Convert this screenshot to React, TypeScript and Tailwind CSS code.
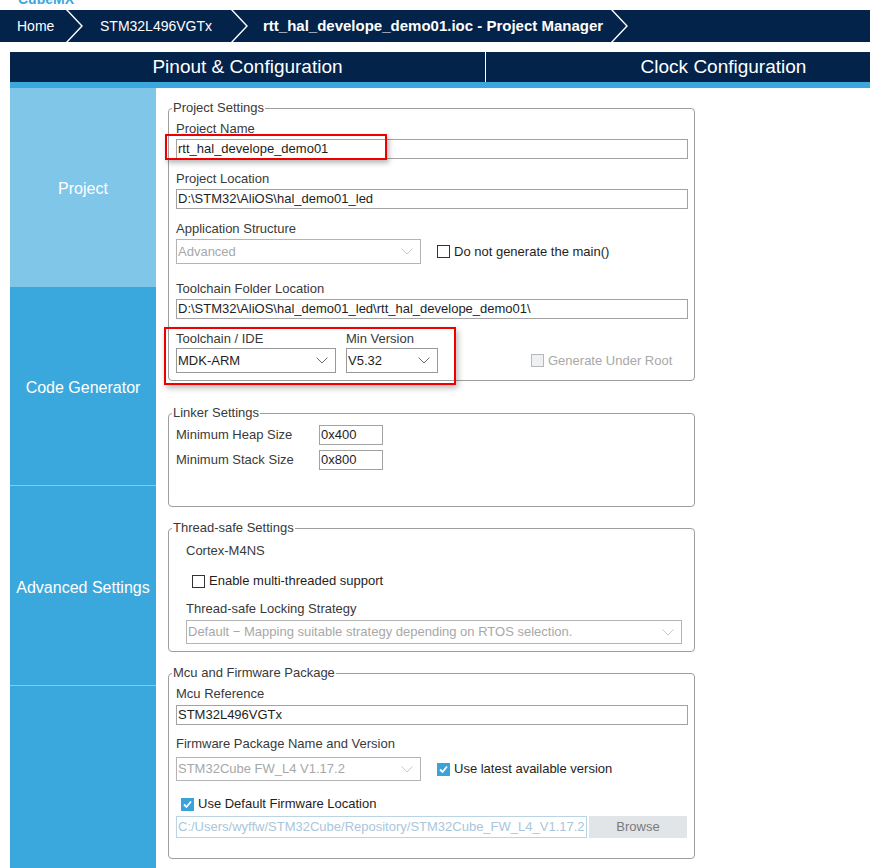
import React from "react";

function SelChevron({ disabled }: { disabled?: boolean }) {
  return (
    <svg width="12" height="7" viewBox="0 0 12 7" className="shrink-0">
      <polyline
        points="0.5,0.5 6,6 11.5,0.5"
        fill="none"
        stroke={disabled ? "#c8c8c8" : "#6b6b6b"}
        strokeWidth="1"
      />
    </svg>
  );
}

function CrumbSep() {
  return (
    <svg width="18" height="32" viewBox="0 0 18 32" className="shrink-0">
      <polyline points="1,-1 17,16 1,33" fill="none" stroke="#ffffff" strokeWidth="1.4" />
    </svg>
  );
}

function Box({ state }: { state: "off" | "on" | "disabled" }) {
  if (state === "on") {
    return (
      <span className="w-[13px] h-[13px] bg-[#3ba3da] flex items-center justify-center shrink-0">
        <svg width="11" height="11" viewBox="0 0 11 11">
          <polyline points="2,5.5 4.5,8 9,2.5" fill="none" stroke="#ffffff" strokeWidth="1.8" />
        </svg>
      </span>
    );
  }
  if (state === "disabled") {
    return <span className="w-[13px] h-[13px] border border-[#b8b8b8] bg-[#eef0f2] shrink-0" />;
  }
  return <span className="w-[13px] h-[13px] border border-[#333333] bg-white shrink-0" />;
}

function Select({
  value,
  w,
  disabled,
  h = "h-[25px]",
}: {
  value: string;
  w: string;
  disabled?: boolean;
  h?: string;
}) {
  return (
    <div
      className={`${w} ${h} border ${
        disabled ? "border-[#b4b4b4] text-[#a8a8a8]" : "border-[#999999] text-[#1e1e1e]"
      } flex items-center justify-between pl-[1px] pr-[7px] text-[13px] whitespace-nowrap overflow-hidden`}
    >
      <span>{value}</span>
      <SelChevron disabled={disabled} />
    </div>
  );
}

function Input({ value, w = "w-full", h = "h-[20px]" }: { value: string; w?: string; h?: string }) {
  return (
    <div
      className={`${w} ${h} border border-[#a3a3a3] flex items-center pl-[1px] text-[13px] text-[#1e1e1e] whitespace-nowrap overflow-hidden`}
    >
      {value}
    </div>
  );
}

const labelCls = "h-[16px] leading-[16px] text-[13px] text-[#3a3a3a] whitespace-nowrap";
const fsCls = "ml-[12px] w-[527px] border border-[#9e9e9e] rounded-[4px] min-w-0";
const legendCls = "ml-[3px] px-[1px] text-[13px] leading-[16px] text-[#3a3a3a]";

export default function App() {
  return (
    <div className="w-full h-[868px] overflow-hidden bg-white font-['Liberation_Sans',Arial,sans-serif] flex flex-col">
      {/* CubeMX cut-off title */}
      <div className="h-[10px] overflow-hidden pl-[18px] shrink-0">
        <span className="block -mt-[8px] text-[14px] leading-[14px] font-bold text-[#3ca6dc]">CubeMX</span>
      </div>

      {/* Breadcrumb */}
      <div className="h-[32px] bg-[#03234b] flex items-center text-white text-[14px] shrink-0">
        <div className="w-[65px] pl-[17px] whitespace-nowrap">Home</div>
        <CrumbSep />
        <div className="w-[147px] pl-[17px] whitespace-nowrap">STM32L496VGTx</div>
        <CrumbSep />
        <div className="w-[362px] pl-[15px] whitespace-nowrap font-bold text-[15px]">
          rtt_hal_develope_demo01.ioc - Project Manager
        </div>
        <CrumbSep />
      </div>

      {/* Tabs */}
      <div className="mt-[10px] ml-[10px] shrink-0 flex flex-col">
        <div className="h-[30px] bg-[#03234b] flex text-white text-[19px]">
          <div className="w-[475px] shrink-0 flex items-center justify-center">Pinout &amp; Configuration</div>
          <div className="w-[1px] shrink-0 bg-white" />
          <div className="w-[475px] shrink-0 flex items-center justify-center">Clock Configuration</div>
        </div>
        <div className="h-[6px] bg-[#3aa8dc]" />
      </div>

      {/* Body */}
      <div className="flex flex-1 min-h-0">
        {/* Sidebar */}
        <div className="ml-[10px] w-[146px] shrink-0 flex flex-col text-white text-[16px]">
          <div className="h-[199px] bg-[#7fc6e9] flex items-center justify-center pt-[2px]">Project</div>
          <div className="h-[198px] bg-[#3aa8dc] flex items-center justify-center pt-[4px]">Code Generator</div>
          <div className="h-[1px] bg-[#86cbee]" />
          <div className="h-[199px] bg-[#3aa8dc] flex items-center justify-center pt-[4px]">Advanced Settings</div>
          <div className="h-[1px] bg-[#86cbee]" />
          <div className="flex-1 bg-[#3aa8dc]" />
        </div>

        {/* Content */}
        <div className="flex-1 flex flex-col">
          {/* Project Settings */}
          <fieldset className={`${fsCls} mt-[12px] pb-[7px]`}>
            <legend className={legendCls}>Project Settings</legend>
            <div className="pl-[7px] pr-[6px] pt-[5px] flex flex-col">
              <div className="relative flex flex-col">
                <div className={labelCls}>Project Name</div>
                <div className="mt-[2px]">
                  <Input value="rtt_hal_develope_demo01" />
                </div>
                <div className="absolute left-[-11px] top-[13px] w-[222px] h-[26px] border-2 border-[#ee0000] shadow-[2px_3px_5px_rgba(0,0,0,0.28)]" />
              </div>
              <div className={`${labelCls} mt-[12px]`}>Project Location</div>
              <div className="mt-[2px]">
                <Input value="D:\STM32\AliOS\hal_demo01_led" />
              </div>
              <div className={`${labelCls} mt-[12px]`}>Application Structure</div>
              <div className="mt-[2px] flex items-center">
                <Select value="Advanced" w="w-[245px]" disabled />
                <div className="ml-[16px] flex items-center gap-[4px] text-[13px] text-[#1e1e1e]">
                  <Box state="off" />
                  <span>Do not generate the main()</span>
                </div>
              </div>
              <div className={`${labelCls} mt-[17px]`}>Toolchain Folder Location</div>
              <div className="mt-[2px]">
                <Input value="D:\STM32\AliOS\hal_demo01_led\rtt_hal_develope_demo01\" />
              </div>
              <div className="relative mt-[12px] flex items-end">
                <div className="flex flex-col">
                  <div className={labelCls}>Toolchain / IDE</div>
                  <div className="mt-[1px]">
                    <Select value="MDK-ARM" w="w-[160px]" />
                  </div>
                </div>
                <div className="ml-[10px] flex flex-col">
                  <div className={labelCls}>Min Version</div>
                  <div className="mt-[1px]">
                    <Select value="V5.32" w="w-[92px]" />
                  </div>
                </div>
                <div className="ml-[93px] h-[25px] flex items-center gap-[4px] text-[13px] text-[#a8a8a8]">
                  <Box state="disabled" />
                  <span>Generate Under Root</span>
                </div>
                <div className="absolute left-[-12px] top-[-4px] w-[292px] h-[58px] border-2 border-[#ee0000] shadow-[2px_3px_6px_rgba(0,0,0,0.28)]" />
              </div>
            </div>
          </fieldset>

          {/* Linker Settings */}
          <fieldset className={`${fsCls} mt-[24px] pb-[36px]`}>
            <legend className={legendCls}>Linker Settings</legend>
            <div className="pl-[7px] pr-[6px] pt-[4px] flex flex-col gap-[5px]">
              <div className="flex items-center h-[20px]">
                <div className={`${labelCls} w-[143px]`}>Minimum Heap Size</div>
                <Input value="0x400" w="w-[64px]" />
              </div>
              <div className="flex items-center h-[20px]">
                <div className={`${labelCls} w-[143px]`}>Minimum Stack Size</div>
                <Input value="0x800" w="w-[64px]" />
              </div>
            </div>
          </fieldset>

          {/* Thread-safe Settings */}
          <fieldset className={`${fsCls} mt-[13px] pb-[7px]`}>
            <legend className={legendCls}>Thread-safe Settings</legend>
            <div className="pl-[17px] pr-[12px] pt-[7px] flex flex-col">
              <div className={labelCls}>Cortex-M4NS</div>
              <div className="mt-[14px] h-[16px] pl-[6px] flex items-center gap-[4px] text-[13px] text-[#1e1e1e]">
                <Box state="off" />
                <span>Enable multi-threaded support</span>
              </div>
              <div className={`${labelCls} mt-[12px]`}>Thread-safe Locking Strategy</div>
              <div className="mt-[3px]">
                <Select
                  value="Default  −  Mapping suitable strategy depending on RTOS selection."
                  w="w-full"
                  h="h-[24px]"
                  disabled
                />
              </div>
            </div>
          </fieldset>

          {/* Mcu and Firmware Package */}
          <fieldset className={`${fsCls} mt-[13px] pb-[20px]`}>
            <legend className={legendCls}>Mcu and Firmware Package</legend>
            <div className="pl-[7px] pr-[6px] pt-[5px] flex flex-col">
              <div className={labelCls}>Mcu Reference</div>
              <div className="mt-[3px]">
                <Input value="STM32L496VGTx" />
              </div>
              <div className={`${labelCls} mt-[11px]`}>Firmware Package Name and Version</div>
              <div className="mt-[5px] flex items-center">
                <Select value="STM32Cube FW_L4 V1.17.2" w="w-[245px]" h="h-[24px]" disabled />
                <div className="ml-[16px] flex items-center gap-[4px] text-[13px] text-[#1e1e1e]">
                  <Box state="on" />
                  <span>Use latest available version</span>
                </div>
              </div>
              <div className="mt-[15px] h-[16px] pl-[5px] flex items-center gap-[4px] text-[13px] text-[#1e1e1e]">
                <Box state="on" />
                <span>Use Default Firmware Location</span>
              </div>
              <div className="mt-[4px] flex items-center h-[22px]">
                <div className="w-[411px] h-[22px] border border-[#bcd3e4] flex items-center pl-[1px] text-[13px] text-[#a9c6dc] whitespace-nowrap overflow-hidden">
                  C:/Users/wyffw/STM32Cube/Repository/STM32Cube_FW_L4_V1.17.2
                </div>
                <div className="ml-[2px] w-[98px] h-[22px] bg-[#e2e5e8] flex items-center justify-center text-[13px] text-[#7a7a7a]">
                  Browse
                </div>
              </div>
            </div>
          </fieldset>
        </div>
      </div>
    </div>
  );
}
